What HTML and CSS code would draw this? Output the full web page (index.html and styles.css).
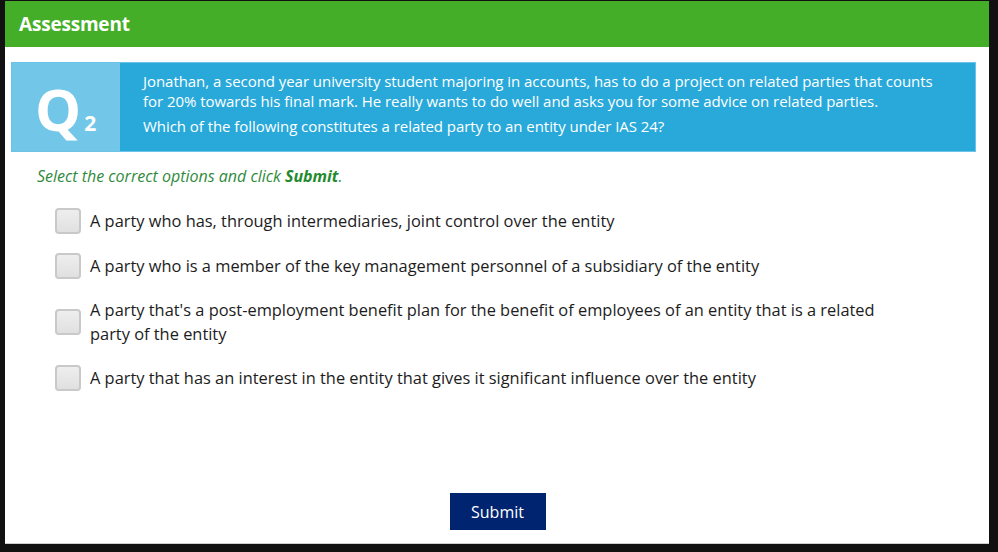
FILE: index.html
```html
<!DOCTYPE html>
<html>
<head>
<meta charset="utf-8">
<link rel="stylesheet" href="styles.css">
</head>
<body>
<div class="panel">
  <header class="header">Assessment</header>
  <div class="content">
    <section class="question">
      <div class="qbadge"><span class="qletter">Q</span><span class="qnum">2</span></div>
      <div class="qtext">
        <p class="qintro">Jonathan, a second year university student majoring in accounts, has to do a project on related parties that counts for 20% towards his final mark. He really wants to do well and asks you for some advice on related parties.</p>
        <p class="qask">Which of the following constitutes a related party to an entity under IAS 24?</p>
      </div>
    </section>
    <p class="instruction">Select the correct options and click <b>Submit</b>.</p>
    <ul class="options">
      <li class="option"><span class="box"></span><span class="label">A party who has, through intermediaries, joint control over the entity</span></li>
      <li class="option"><span class="box"></span><span class="label">A party who is a member of the key management personnel of a subsidiary of the entity</span></li>
      <li class="option"><span class="box"></span><span class="label">A party that's a post-employment benefit plan for the benefit of employees of an entity that is a related party of the entity</span></li>
      <li class="option"><span class="box"></span><span class="label">A party that has an interest in the entity that gives it significant influence over the entity</span></li>
    </ul>
    <div class="actions"><button class="submit">Submit</button></div>
  </div>
</div>
</body>
</html>
```
FILE: styles.css
```css
html, body {
  margin: 0;
  padding: 0;
  background: #111111;
  height: 552px;
  overflow: hidden;
}
body {
  padding: 1px 9px 0 5px;
  font-family: "Open Sans", "Liberation Sans", sans-serif;
}
.panel {
  width: 984px;
  height: 543px;
  background: #ffffff;
  border-bottom: 1px solid #cfcfcf;
  box-sizing: border-box;
  display: flex;
  flex-direction: column;
}
.header {
  height: 46px;
  background: #45ae29;
  color: #ffffff;
  font-weight: 700;
  font-size: 19px;
  padding-left: 14px;
  line-height: 46px;
  box-sizing: border-box;
  letter-spacing: -0.2px;
}
.content {
  flex: 1;
  display: flex;
  flex-direction: column;
  padding: 15px 13px 0 6px;
}
.question {
  display: flex;
  height: 90px;
  border: 1px solid #6cc3e8;
  box-sizing: border-box;
  background: #29a9da;
}
.qbadge {
  width: 108px;
  background: #72c7e9;
  color: #ffffff;
  font-weight: 700;
  display: flex;
  align-items: baseline;
  padding: 0 0 0 23px;
  box-sizing: border-box;
}
.qletter {
  font-size: 58px;
  line-height: 80px;
  margin-top: 6px;
}
.qnum {
  font-size: 21px;
  margin-left: 3px;
}
.qtext {
  flex: 1;
  padding: 8px 40px 0 23px;
  color: #ffffff;
  font-size: 15px;
  letter-spacing: -0.05px;
}
.qtext p {
  margin: 0;
}
.qintro {
  line-height: 20px;
}
.qask {
  margin-top: 5px !important;
  line-height: 20px;
}
.instruction {
  margin: 13px 0 0 26px;
  font-style: italic;
  font-size: 16px;
  color: #2f8a3c;
  line-height: 22px;
}
.instruction b {
  color: #1f8a2e;
  font-weight: 700;
}
.options {
  list-style: none;
  margin: 21px 0 0 44px;
  padding: 0;
  display: flex;
  flex-direction: column;
  gap: 19px;
  width: 830px;
}
.option {
  display: flex;
  align-items: center;
  gap: 9px;
  font-size: 16.4px;
  line-height: 24px;
  color: #1c1c1c;
}
.box {
  flex: none;
  width: 26px;
  height: 26px;
  border: 2px solid #c9c9c9;
  border-radius: 4px;
  box-sizing: border-box;
  background: linear-gradient(#eeeeee, #e0e0e0);
}
.label {
  display: block;
}
.actions {
  margin-top: auto;
  margin-bottom: 13px;
  display: flex;
  justify-content: center;
  padding-left: 8px;
}
.submit {
  width: 96px;
  height: 37px;
  background: #00246f;
  border: none;
  color: #ffffff;
  font-family: "Open Sans", "Liberation Sans", sans-serif;
  font-size: 16px;
  padding: 0;
}
```
